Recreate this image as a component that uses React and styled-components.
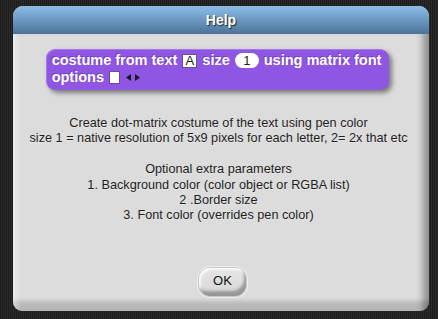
import * as React from "react";
import styled, { createGlobalStyle } from "styled-components";

const GlobalStyle = createGlobalStyle`
    html, body {
        margin: 0;
        padding: 0;
    }
    body {
        width: 438px;
        height: 319px;
        overflow: hidden;
        font-family: "Liberation Sans", Arial, sans-serif;
        background: repeating-linear-gradient(
            90deg,
            #1c1c1c 0px,
            #1c1c1c 1px,
            #2c2c2c 1px,
            #2c2c2c 2px
        );
    }
`;

const Stage = styled.div`
    padding: 6px 9px 0 13px;
`;

const Dialog = styled.div`
    width: 416px;
    height: 305px;
    border-radius: 10px 10px 9px 9px;
    overflow: hidden;
    display: flex;
    flex-direction: column;
    background: #dcdcdc;
`;

const TitleBar = styled.div`
    height: 28px;
    flex: none;
    display: flex;
    align-items: center;
    justify-content: center;
    background: linear-gradient(#8cbde9, #4b7399);
    color: #fff;
    font-weight: bold;
    font-size: 14px;
    text-shadow: 1px 1px 1px rgba(0, 0, 0, 0.75);
`;

const Body = styled.div`
    flex: 1;
    display: flex;
    flex-direction: column;
    align-items: center;
    padding: 15px 5px 0 0;
    box-shadow: inset 8px 0 6px -5px rgba(255, 255, 255, 0.55),
        inset -11px 0 7px -5px rgba(0, 0, 0, 0.35),
        inset 0 -13px 4px -3px rgba(0, 0, 0, 0.16);
`;

const Block = styled.div`
    background: #8f56e3;
    border-radius: 9px;
    padding: 3px 8px 4px 6px;
    color: #fff;
    font-weight: bold;
    font-size: 14.5px;
    line-height: 17px;
    margin-left: -2px;
    text-shadow: -1px -1px 0 rgba(60, 20, 120, 0.35);
    box-shadow: 3px 3px 5px rgba(0, 0, 0, 0.45),
        inset 1px 1px 0 rgba(255, 255, 255, 0.2);
`;

const BlockRow = styled.div`
    display: flex;
    align-items: center;
    gap: 5px;
    white-space: nowrap;
`;

const Slot = styled.span`
    display: inline-flex;
    align-items: center;
    justify-content: center;
    width: ${(p) => p.w}px;
    height: ${(p) => p.h}px;
    background: #fff;
    border: 1px solid #6a4a9a;
    box-sizing: border-box;
    color: #222;
    font-weight: normal;
    font-size: 13px;
    text-shadow: none;
`;

const Pill = styled.span`
    display: inline-flex;
    align-items: center;
    justify-content: center;
    width: 24px;
    height: 15px;
    border-radius: 8px;
    background: #fff;
    color: #222;
    font-weight: normal;
    font-size: 13px;
    text-shadow: none;
`;

const Arrows = styled.svg`
    margin-left: 1px;
`;

const HelpText = styled.div`
    margin-top: 26px;
    text-align: center;
    font-size: 12.7px;
    line-height: 15.4px;
    color: #1e1e1e;
    white-space: nowrap;
    text-shadow: 0 1px 0 rgba(255, 255, 255, 0.3);
`;

const Gap = styled.div`
    height: 15.4px;
`;

const OkButton = styled.button`
    margin-top: 44px;
    margin-left: 8px;
    width: 47px;
    height: 28px;
    border: none;
    border-radius: 11px;
    font-family: inherit;
    font-size: 13px;
    color: #111;
    padding: 0 0 3px;
    background: linear-gradient(#e6e6e6, #d6d6d6);
    box-shadow: 0 0 0 1px #c8c8c8, 0 0 0 2px #eeeeee,
        inset -3px -6px 3px -1px rgba(0, 0, 0, 0.3),
        inset 2px 2px 2px rgba(255, 255, 255, 0.8);
`;

export default function App() {
    return (
        <>
            <GlobalStyle />
            <Stage>
                <Dialog>
                    <TitleBar>Help</TitleBar>
                    <Body>
                        <Block>
                            <BlockRow>
                                costume from text
                                <Slot w={15} h={14}>
                                    A
                                </Slot>
                                size
                                <Pill>1</Pill>
                                using matrix font
                            </BlockRow>
                            <BlockRow>
                                options
                                <Slot w={11} h={13} />
                                <Arrows width="14" height="7" viewBox="0 0 14 7">
                                    <polygon points="0,3.5 5,0 5,7" fill="#1a1a1a" />
                                    <polygon points="14,3.5 9,0 9,7" fill="#1a1a1a" />
                                </Arrows>
                            </BlockRow>
                        </Block>
                        <HelpText>
                            <div>Create dot-matrix costume of the text using pen color</div>
                            <div>
                                size 1 = native resolution of 5x9 pixels for each letter, 2= 2x
                                that etc
                            </div>
                            <Gap />
                            <div>Optional extra parameters</div>
                            <div>1. Background color (color object or RGBA list)</div>
                            <div>2 .Border size</div>
                            <div>3. Font color (overrides pen color)</div>
                        </HelpText>
                        <OkButton>OK</OkButton>
                    </Body>
                </Dialog>
            </Stage>
        </>
    );
}
